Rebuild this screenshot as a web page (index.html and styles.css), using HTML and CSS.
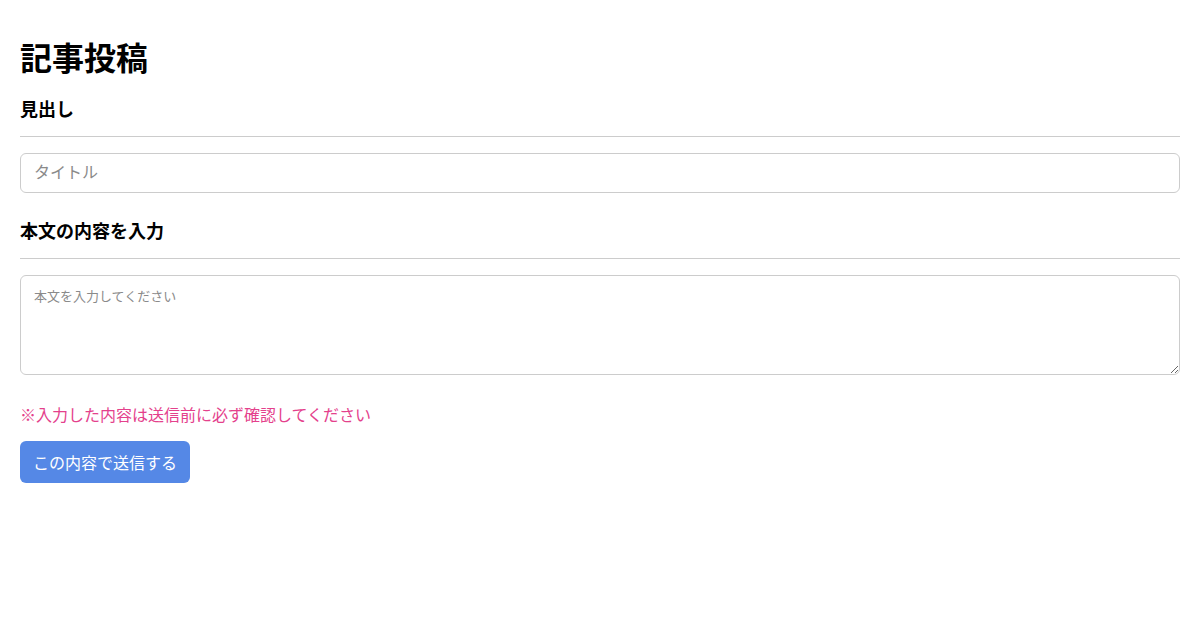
FILE: index.html
```html
<!DOCTYPE html>
<html lang="ja">

<head>
    <meta charset="utf-8">
    <title>記事投稿</title>
    <link rel="stylesheet" href="styles.css">
</head>

<body>
    <div class="page">
        <h1>記事投稿</h1>

        <form class="post-form">
            <div class="field">
                <h3 class="field-title">見出し</h3>
                <input type="text" class="text-input" placeholder="タイトル">
            </div>

            <div class="field">
                <h3 class="field-title">本文の内容を入力</h3>
                <textarea class="text-area" placeholder="本文を入力してください"></textarea>
            </div>

            <p class="notice">※入力した内容は送信前に必ず確認してください</p>

            <button type="button" class="submit-button">この内容で送信する</button>
        </form>
    </div>
</body>

</html>
```

FILE: styles.css
```css
body {
    margin: 0;
    font-family: "Liberation Sans", "Noto Sans CJK JP", sans-serif;
    color: #000000;
    background-color: #ffffff;
}

.page {
    padding: 20px;
}

h1 {
    margin: 21px 0;
    font-size: 32px;
    line-height: 37px;
    font-weight: 700;
}

.field {
    margin-bottom: 28px;
}

.field-title {
    margin: 0 0 16px;
    padding-bottom: 15px;
    border-bottom: 1px solid #cccccc;
    font-size: 18px;
    line-height: 22px;
    font-weight: 700;
}

.text-input,
.text-area {
    display: block;
    width: 100%;
    box-sizing: border-box;
    border: 1px solid #cccccc;
    border-radius: 6px;
    font-family: inherit;
    color: #333333;
    outline: none;
}

.text-input {
    height: 40px;
    padding: 0 13px;
    font-size: 16px;
}

.text-area {
    height: 100px;
    padding: 12px 13px;
    font-size: 13px;
    line-height: 18px;
    resize: vertical;
}

.text-input::placeholder,
.text-area::placeholder {
    color: #8a8a8a;
}

.notice {
    margin: 31px 0 15px;
    font-size: 16px;
    line-height: 20px;
    color: #e4418c;
}

.submit-button {
    height: 42px;
    padding: 0 13px;
    border: none;
    border-radius: 6px;
    background-color: #5588e6;
    color: #ffffff;
    font-family: inherit;
    font-size: 16px;
    cursor: pointer;
}

.submit-button:hover {
    background-color: #4477d5;
}
```
